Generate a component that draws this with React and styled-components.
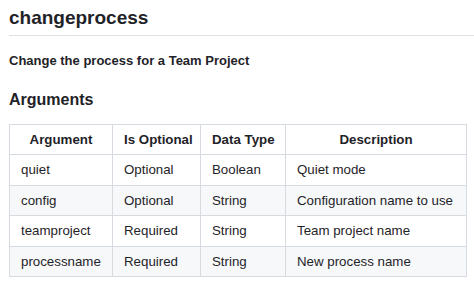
import React from "react";
import styled, { createGlobalStyle } from "styled-components";

const Global = createGlobalStyle`
  html, body { margin: 0; padding: 0; background: #ffffff; }
  body {
    font-family: "Liberation Sans", Arial, Helvetica, sans-serif;
    color: #1f2328;
  }
`;

const Page = styled.main`
  padding: 0 0 0 9px;
  width: 474px;
  box-sizing: border-box;
`;

const Title = styled.h2`
  margin: 6px 0 0 0;
  padding: 0 0 5px 0;
  font-size: 19px;
  line-height: 24px;
  font-weight: 700;
  border-bottom: 1px solid #dde1e6;
`;

const Lead = styled.p`
  margin: 15px 0 0 0;
  font-size: 13px;
  line-height: 20px;
  font-weight: 700;
`;

const Section = styled.h3`
  margin: 19px 0 0 0;
  font-size: 16px;
  line-height: 20px;
  font-weight: 700;
`;

const Table = styled.table`
  margin-top: 14px;
  border-collapse: collapse;
  table-layout: fixed;
  width: 457px;
  font-size: 13.3px;
  line-height: 19.4px;
`;

const Row = styled.tr`
  background: ${(p) => (p.$alt ? "#f6f8fa" : "#ffffff")};
`;

const Head = styled.th`
  border: 1px solid #d5dbe1;
  padding: 5px 11px;
  font-weight: 700;
  text-align: center;
  white-space: nowrap;
`;

const Cell = styled.td`
  border: 1px solid #d5dbe1;
  padding: 5px 11px;
  white-space: nowrap;
`;

const rows = [
  ["quiet", "Optional", "Boolean", "Quiet mode"],
  ["config", "Optional", "String", "Configuration name to use"],
  ["teamproject", "Required", "String", "Team project name"],
  ["processname", "Required", "String", "New process name"],
];

export default function App() {
  return (
    <Page>
      <Global />
      <Title>changeprocess</Title>
      <Lead>Change the process for a Team Project</Lead>
      <Section>Arguments</Section>
      <Table>
        <colgroup>
          <col style={{ width: 103 }} />
          <col style={{ width: 88 }} />
          <col style={{ width: 85 }} />
          <col style={{ width: 181 }} />
        </colgroup>
        <thead>
          <Row>
            <Head>Argument</Head>
            <Head>Is Optional</Head>
            <Head>Data Type</Head>
            <Head>Description</Head>
          </Row>
        </thead>
        <tbody>
          {rows.map((r, i) => (
            <Row key={r[0]} $alt={i % 2 === 1}>
              {r.map((c) => (
                <Cell key={c}>{c}</Cell>
              ))}
            </Row>
          ))}
        </tbody>
      </Table>
    </Page>
  );
}
